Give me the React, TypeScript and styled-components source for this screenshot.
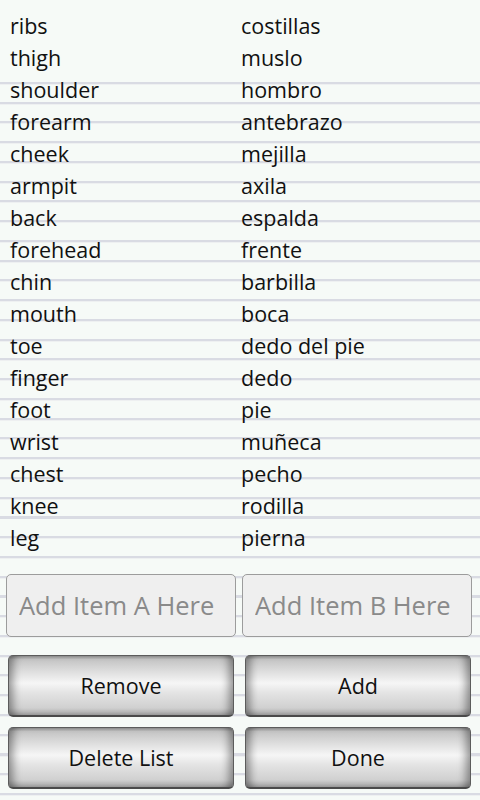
import React from 'react'
import styled, { createGlobalStyle } from 'styled-components'

const GlobalStyle = createGlobalStyle`
  html, body {
    margin: 0;
    padding: 0;
    background: #f6faf7;
  }
  * {
    box-sizing: border-box;
  }
`

const Page = styled.div`
  width: 480px;
  height: 800px;
  display: flex;
  flex-direction: column;
  font-family: 'Open Sans', 'DejaVu Sans', sans-serif;
  background-color: #f6faf7;
  background-image: repeating-linear-gradient(
    to bottom,
    #d9dbe3 0px,
    #d9dbe3 2px,
    #eef0f1 2px,
    #eef0f1 3px,
    transparent 3px,
    transparent 19.75px
  );
  background-position: 0 82px;
  background-size: 100% 100%;
  background-repeat: no-repeat;
  overflow: hidden;
`

const WordList = styled.div`
  padding-top: 10px;
  display: flex;
  flex-direction: column;
`

const WordRow = styled.div`
  display: grid;
  grid-template-columns: 231px 1fr;
  padding-left: 10px;
  height: 32px;
  line-height: 32px;
  font-size: 21.5px;
  color: #111;
`

const Cell = styled.span`
  white-space: nowrap;
`

const Form = styled.div`
  margin-top: 20px;
  display: flex;
  flex-direction: column;
`

const InputRow = styled.div`
  display: flex;
  gap: 6px;
  padding: 0 6px;
`

const ItemInput = styled.input`
  width: 230px;
  height: 63px;
  border: 1px solid #9c9c9c;
  border-radius: 5px;
  background: #efefef;
  font-family: 'Open Sans', 'DejaVu Sans', sans-serif;
  font-size: 25.5px;
  padding: 0 0 2px 12px;
  color: #222;
  outline: none;
  &::placeholder {
    color: #8a8a8a;
  }
`

const ButtonGrid = styled.div`
  margin-top: 18px;
  display: grid;
  grid-template-columns: 226px 226px;
  column-gap: 11px;
  row-gap: 10px;
  padding: 0 8px;
`

const GlossButton = styled.button`
  height: 62px;
  border: 1px solid #5c5c5c;
  border-bottom: 2px solid #4a4a4a;
  border-radius: 5px;
  background: linear-gradient(
    to bottom,
    #9a9a9a 0%,
    #c4c4c4 6%,
    #d6d6d6 20%,
    #f6f6f6 46%,
    #e4e4e4 62%,
    #d0d0d0 88%,
    #a8a8a8 100%
  );
  box-shadow: inset 9px 0 8px -5px rgba(0, 0, 0, 0.4),
    inset -9px 0 8px -5px rgba(0, 0, 0, 0.4);
  font-family: 'Open Sans', 'DejaVu Sans', sans-serif;
  font-size: 21.5px;
  color: #111;
  padding: 0;
`

const words: [string, string][] = [
  ['ribs', 'costillas'],
  ['thigh', 'muslo'],
  ['shoulder', 'hombro'],
  ['forearm', 'antebrazo'],
  ['cheek', 'mejilla'],
  ['armpit', 'axila'],
  ['back', 'espalda'],
  ['forehead', 'frente'],
  ['chin', 'barbilla'],
  ['mouth', 'boca'],
  ['toe', 'dedo del pie'],
  ['finger', 'dedo'],
  ['foot', 'pie'],
  ['wrist', 'muñeca'],
  ['chest', 'pecho'],
  ['knee', 'rodilla'],
  ['leg', 'pierna'],
]

export default function App() {
  return (
    <>
      <GlobalStyle />
      <Page>
        <WordList>
          {words.map(([a, b]) => (
            <WordRow key={a}>
              <Cell>{a}</Cell>
              <Cell>{b}</Cell>
            </WordRow>
          ))}
        </WordList>
        <Form>
          <InputRow>
            <ItemInput placeholder="Add Item A Here" />
            <ItemInput placeholder="Add Item B Here" />
          </InputRow>
          <ButtonGrid>
            <GlossButton>Remove</GlossButton>
            <GlossButton>Add</GlossButton>
            <GlossButton>Delete List</GlossButton>
            <GlossButton>Done</GlossButton>
          </ButtonGrid>
        </Form>
      </Page>
    </>
  )
}
